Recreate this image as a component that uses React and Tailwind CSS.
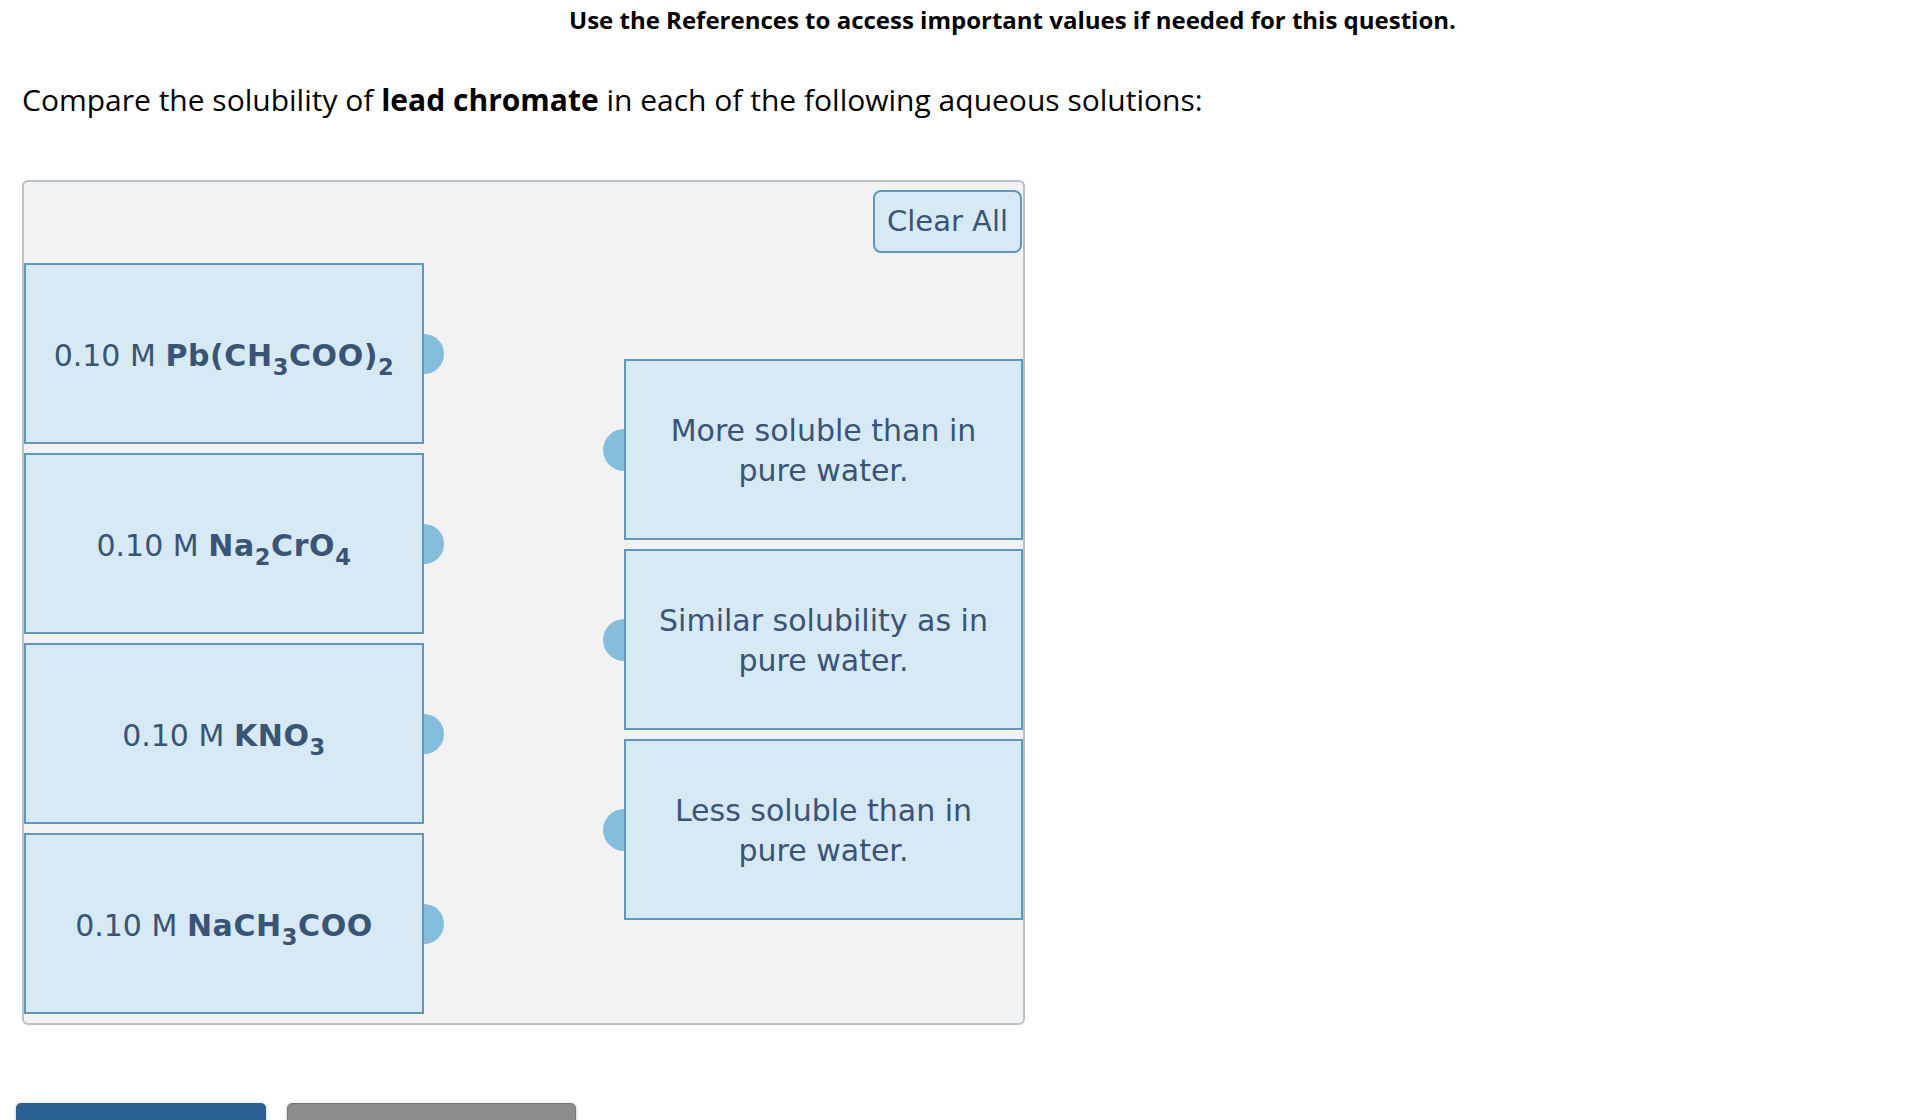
import React from "react";

const solucoes = [
  { id: 1, formula: <>Pb(CH<sub className="bottom-[-0.4em]">3</sub>COO)<sub className="bottom-[-0.4em]">2</sub></> },
  { id: 2, formula: <>Na<sub className="bottom-[-0.4em]">2</sub>CrO<sub className="bottom-[-0.4em]">4</sub></> },
  { id: 3, formula: <>KNO<sub className="bottom-[-0.4em]">3</sub></> },
  { id: 4, formula: <>NaCH<sub className="bottom-[-0.4em]">3</sub>COO</> },
];

const categorias = [
  "More soluble than in pure water.",
  "Similar solubility as in pure water.",
  "Less soluble than in pure water.",
];

export default function App() {
  return (
    <div className="min-h-[1120px] bg-white text-black font-['Open_Sans',sans-serif] overflow-hidden">
      {/* Cabeçalho */}
      <p className="pt-[5px] pl-[569px] text-[24px] leading-[30px] font-bold">
        Use the References to access important values if needed for this question.
      </p>
      <p className="mt-[45px] pl-[22px] text-[30px] leading-[40px]">
        Compare the solubility of <b>lead chromate</b> in each of the following aqueous solutions:
      </p>

      {/* Área de arrastar */}
      <div className="mt-[60px] ml-[22px] w-[1003px] border-2 border-[#b8c2cc] rounded-[6px] bg-[#f2f2f2] pt-[8px] pb-[9px] text-[#3a5475] font-['DejaVu_Sans',Verdana,sans-serif]">
        <div className="flex justify-end pr-px">
          <button className="h-[63px] w-[149px] border-2 border-[#6197ba] rounded-[8px] bg-[#d6e9f5] text-[29px] leading-none">
            Clear All
          </button>
        </div>

        <div className="flex justify-between mt-[10px]">
          <div className="flex flex-col gap-[9px] w-[400px]">
            {solucoes.map((s) => (
              <div key={s.id} className="relative h-[181px]">
                <span className="absolute right-[-20px] top-1/2 -translate-y-1/2 w-[40px] h-[40px] rounded-full bg-[#85bedd]" />
                <div className="relative h-full border-2 border-[#6197ba] bg-[#d6e9f5] flex items-center justify-center pt-[3px] text-[30px]">
                  <span>
                    0.10 M <b className="tracking-[0.6px]">{s.formula}</b>
                  </span>
                </div>
              </div>
            ))}
          </div>

          <div className="flex flex-col gap-[9px] w-[399px] mt-[96px]">
            {categorias.map((c, i) => (
              <div key={i} className="relative h-[181px]">
                <span className="absolute left-[-21px] top-1/2 -translate-y-1/2 w-[42px] h-[42px] rounded-full bg-[#85bedd]" />
                <div className="relative h-full border-2 border-[#6197ba] bg-[#d6e9f5] flex items-center justify-center px-5 pt-[2px] text-center text-[30px] leading-[40px]">
                  {c}
                </div>
              </div>
            ))}
          </div>
        </div>
      </div>

      {/* Botões */}
      <div className="flex gap-[21px] mt-[78px] ml-[16px]">
        <button className="w-[250px] h-[50px] rounded-[5px] bg-[#2a5f91] shadow-[0_1px_3px_rgba(0,0,0,0.3)]" />
        <button className="w-[289px] h-[50px] rounded-[5px] bg-[#8c8c8c] border border-[#777] shadow-[0_1px_3px_rgba(0,0,0,0.3)]" />
      </div>
    </div>
  );
}
